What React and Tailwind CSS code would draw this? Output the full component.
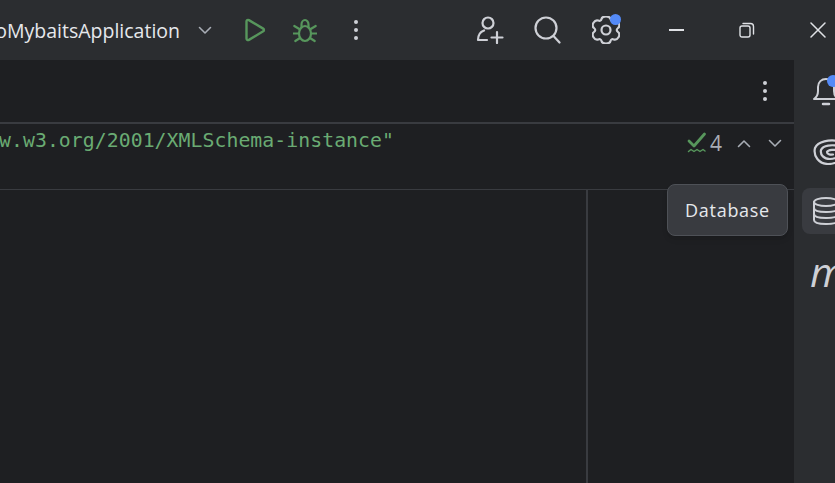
import React from 'react';

const Slot = ({ className = 'w-[50px]', children }) => (
  <div className={`${className} h-full shrink-0 flex items-center justify-center`}>{children}</div>
);

const stroke = { fill: 'none', strokeLinecap: 'round', strokeLinejoin: 'round' };

// rounded outline of the settings gear
const gearPoints = [
  [10, 0.5], [18, 0.5], [19, 5.5], [24.5, 3.5], [28.5, 10], [23.5, 14],
  [28.5, 18], [24.5, 24.5], [19, 22.5], [18, 27.500], [10, 27.500], [9, 22.500],
  [3.5, 24.500], [-0.5, 18], [4.5, 14], [-0.5, 10], [3.5, 3.500], [9, 5.500],
];
const mid = (a, b) => [(a[0] + b[0]) / 2, (a[1] + b[1]) / 2];
const gearPath = gearPoints.map((p, i) => {
  const next = mid(p, gearPoints[(i + 1) % gearPoints.length]);
  const start = i === 0 ? `M${mid(gearPoints[gearPoints.length - 1], p).join(' ')}` : '';
  return `${start}Q${p.join(' ')} ${next.join(' ')}`;
}).join('') + 'Z';

function Dots({ className }) {
  return (
    <svg width="6" height="22" viewBox="0 0 6 22" className={className}>
      <circle cx="3" cy="3" r="2" fill="#ced0d6" />
      <circle cx="3" cy="11" r="2" fill="#ced0d6" />
      <circle cx="3" cy="19" r="2" fill="#ced0d6" />
    </svg>
  );
}

function Chevron({ up, color = '#a8adb5' }) {
  return (
    <svg width="14" height="9" viewBox="0 0 14 9" {...stroke} stroke={color} strokeWidth="1.6">
      <path d={up ? 'M1.5 7.5 7 2l5.5 5.5' : 'M1.5 1.5 7 7l5.5-5.5'} />
    </svg>
  );
}

function TitleBar() {
  return (
    <div className="h-[60px] shrink-0 bg-[#2b2d30] flex items-center">
      <div className="w-[180px] h-full shrink-0 flex items-center justify-end overflow-hidden">
        <span className="text-[19.5px] text-[#e6e8ec] whitespace-nowrap font-['Open_Sans',sans-serif] pt-[2px]">
          DemoMybaitsApplication
        </span>
      </div>
      <Slot>
        <Chevron />
      </Slot>
      <Slot>
        <svg width="22" height="24" viewBox="0 0 22 24" {...stroke} stroke="#57965c" strokeWidth="2.4">
          <path d="M2.5 3.5c0-1.4 1.3-2 2.4-1.4l14.3 8.5c1 .6 1 2.1 0 2.7L4.9 21.900c-1.100.6-2.400 0-2.400-1.400z" />
        </svg>
      </Slot>
      <Slot>
        <svg width="24" height="25" viewBox="0 0 24 25" {...stroke} stroke="#57965c" strokeWidth="2.2">
          <ellipse cx="12" cy="15.500" rx="6" ry="7.500" />
          <path d="M8.500 9.500V6.500a3.500 4.500 0 0 1 7 0v3M1.300 8l5.400 3.300M22.700 8l-5.400 3.300M.6 15.500H6M23.400 15.500H18M2.300 23 7 20M21.700 23 17 20" />
        </svg>
      </Slot>
      <Slot className="w-[52px]">
        <Dots />
      </Slot>
      <div className="flex-1" />
      <Slot className="w-[57px]">
        <svg width="28" height="28" viewBox="0 0 28 28" {...stroke} stroke="#ced0d6" strokeWidth="2.200">
          <circle cx="12" cy="7" r="5.500" />
          <path d="M2 24c0-5 2-8 6-9.500M2 24h9M21 16v11M15.500 21.500h11" />
        </svg>
      </Slot>
      <Slot className="w-[58px]">
        <svg width="27" height="28" viewBox="0 0 27 28" {...stroke} stroke="#ced0d6" strokeWidth="2.200">
          <circle cx="12" cy="12" r="10.500" />
          <path d="m19.500 20 6 6.500" />
        </svg>
      </Slot>
      <Slot className="w-[59px]">
        <div className="relative w-[28px] h-[28px]">
          <svg width="28" height="28" viewBox="0 0 28 28" {...stroke} stroke="#ced0d6" strokeWidth="2.200">
            <circle cx="14" cy="14" r="4.500" />
            <path d={gearPath} />
          </svg>
          <div className="absolute -top-[2px] left-[18px] w-[11px] h-[11px] rounded-full bg-[#548af7]" />
        </div>
      </Slot>
      <div className="w-[6px] shrink-0" />
      <Slot className="w-[71px]">
        <div className="w-[15px] h-[2px] bg-[#dfe1e5]" />
      </Slot>
      <Slot className="w-[70px]">
        <svg width="16" height="16" viewBox="0 0 16 16" {...stroke} stroke="#dfe1e5" strokeWidth="1.400">
          <rect x="1" y="4" width="10" height="11" rx="2" />
          <path d="M4 1.500h7.500a3 3 0 0 1 3 3V12" />
        </svg>
      </Slot>
      <Slot className="w-[53px] justify-start pl-[28px]">
        <svg width="16" height="16" viewBox="0 0 16 16" {...stroke} stroke="#dfe1e5" strokeWidth="1.500" className="shrink-0">
          <path d="m1 1 14 14M15 1 1 15" />
        </svg>
      </Slot>
    </div>
  );
}

function Editor() {
  return (
    <div className="flex-1 min-w-0 flex flex-col">
      <div className="h-[64px] shrink-0 flex items-center justify-end pr-[26px] border-b-2 border-[#393b40]">
        <Dots />
      </div>
      <div className="h-[66px] shrink-0 flex items-start border-b border-[#393b40]">
        <span className="text-[19.800px] leading-[30px] mt-[2px] text-[#6aab73] whitespace-nowrap font-['DejaVu_Sans_Mono',monospace] tracking-[0.06px] -ml-[1px]">
          w.w3.org/2001/XMLSchema-instance"
        </span>
        <div className="ml-auto flex items-center h-[38px] pr-[12px]">
          <svg width="20" height="22" viewBox="0 0 20 22" {...stroke} stroke="#57965c" strokeWidth="2.800" className="shrink-0">
            <path d="m2 9 5 5L17.500 2" />
            <path strokeWidth="1.500" d="M1.500 19.500l2.500-2 3 2 3-2 3 2 3-2 2 1.500" />
          </svg>
          <span className="ml-[3px] text-[21px] leading-none text-[#a8adb5] font-['Open_Sans',sans-serif]">4</span>
          <div className="ml-[15px]"><Chevron up /></div>
          <div className="ml-[17px]"><Chevron /></div>
        </div>
      </div>
      <div className="flex-1 flex">
        <div className="w-[586px] border-r-2 border-[#393b40] box-content" />
      </div>
    </div>
  );
}

function ToolStrip() {
  return (
    <div className="w-[41px] shrink-0 bg-[#2b2d30] flex flex-col pl-[8px] overflow-hidden">
      <div className="h-[64px] shrink-0 flex items-start pl-[11px] pt-[17px]">
        <div className="relative w-[26px] h-[30px] shrink-0">
          <svg width="26" height="30" viewBox="0 0 26 30" {...stroke} stroke="#ced0d6" strokeWidth="2">
            <path d="M1 22c3-2 4-4 4-8V10c0-5 3.500-8 8-8s8 3 8 8v4c0 4 1 6 4 8z" />
            <path d="M10 27h6" strokeWidth="2.500" />
          </svg>
          <div className="absolute -top-[2px] left-[14px] w-[12px] h-[12px] rounded-full bg-[#548af7]" />
        </div>
      </div>
      <div className="h-[64px] shrink-0 flex items-start pl-[11px] pt-[15px]">
        <svg width="26" height="26" viewBox="0 0 26 26" {...stroke} stroke="#ced0d6" strokeWidth="2.200" className="shrink-0">
          <path d="M26 2C16 .5 5 2 2 9c-2 8 4 16 13 16 5 0 9-1.500 11-4" />
          <path d="M26 7c-7-1.500-16-1-18 4-1 5 3 9 9 9 4 0 7-1 9-4" />
          <path d="M26 11.500c-4-1-11-1-12 1.500 0 2 3 3 6 2.500" />
        </svg>
      </div>
      <div className="h-[46px] w-[50px] shrink-0 rounded-lg bg-[#393b40] flex items-center pl-[11px]">
        <svg width="26" height="28" viewBox="0 0 26 28" {...stroke} stroke="#ced0d6" strokeWidth="2" className="shrink-0">
          <ellipse cx="13" cy="5" rx="12" ry="4" />
          <path d="M1 5v18c0 2.500 5 4 12 4s12-1.500 12-4V5M1 11c0 2.500 5 4 12 4s12-1.500 12-4M1 17c0 2.500 5 4 12 4s12-1.500 12-4" />
        </svg>
      </div>
      <div className="h-[72px] shrink-0 flex items-center pl-[8px]">
        <span className="text-[41px] leading-none italic font-normal text-[#ced0d6] font-['Open_Sans',sans-serif] pt-[2px]">m</span>
      </div>
    </div>
  );
}

export default function App() {
  return (
    <div className="relative w-[835px] h-[483px] overflow-hidden bg-[#1e1f22] flex flex-col">
      <TitleBar />
      <div className="flex-1 min-h-0 flex">
        <Editor />
        <ToolStrip />
      </div>
      <div className="absolute left-[667px] top-[184px] w-[121px] h-[52px] rounded-lg bg-[#393b40] border border-[#4e5157] shadow-md flex items-center justify-center">
        <span className="text-[18px] text-[#e6e8ec] font-['Open_Sans',sans-serif] tracking-[0.7px]">Database</span>
      </div>
    </div>
  );
}
